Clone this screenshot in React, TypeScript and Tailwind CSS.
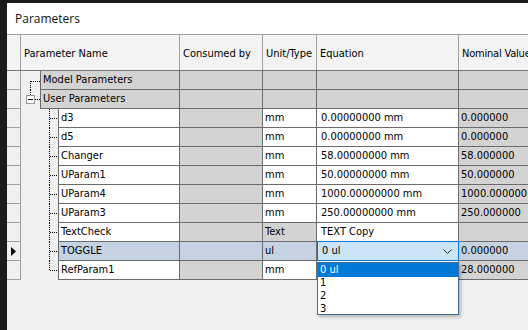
import React from 'react';

interface Param {
  name:  string;
  unit:  string;
  eq:    string;
  nom:   string;
  unitGrey?: boolean;
}

const params: Param[] = [
  { name: 'd3',        unit: 'mm',   eq: '0.00000000 mm',    nom: '0.000000' },
  { name: 'd5',        unit: 'mm',   eq: '0.00000000 mm',    nom: '0.000000' },
  { name: 'Changer',   unit: 'mm',   eq: '58.00000000 mm',   nom: '58.000000' },
  { name: 'UParam1',   unit: 'mm',   eq: '50.00000000 mm',   nom: '50.000000' },
  { name: 'UParam4',   unit: 'mm',   eq: '1000.00000000 mm', nom: '1000.000000' },
  { name: 'UParam3',   unit: 'mm',   eq: '250.00000000 mm',  nom: '250.000000' },
  { name: 'TextCheck', unit: 'Text', eq: 'TEXT Copy',        nom: '', unitGrey: true },
  { name: 'TOGGLE',    unit: 'ul',   eq: '0 ul',             nom: '0.000000' },
  { name: 'RefParam1', unit: 'mm',   eq: '',                 nom: '28.000000' },
];

const line = 'border-[#6b6b6b]';

function RowHead({ active }: { active?: boolean }) {
  return (
    <div className="w-[14px] h-full flex-shrink-0 bg-[#f0f0f0] border-r border-b border-[#a0a0a0] flex items-center justify-center">
      {active && (
        <svg width="5" height="9" viewBox="0 0 5 9"><path d="M0 0 L5 4.5 L0 9 Z" fill="#000" /></svg>
      )}
    </div>
  );
}

function ChildTree({ last }: { last: boolean }) {
  return (
    <svg width="37" height="19" className="flex-shrink-0 block">
      <line x1="28.5" y1="0" x2="28.5" y2={last ? 10 : 19} stroke="#000" strokeDasharray="1 1" />
      <line x1="29" y1="9.5" x2="37" y2="9.5" stroke="#000" strokeDasharray="1 1" />
    </svg>
  );
}

export default function App() {
  return (
    <div className="w-[528px] h-[330px] overflow-hidden bg-[#1b1b1b] pt-[3px] pl-[7px] font-['DejaVu_Sans_Condensed','DejaVu_Sans',sans-serif] text-[11px] text-black">
      <div className="w-[560px] h-[340px] bg-[#f0f0f0] flex flex-col">
        {/* Title */}
        <div className="h-[31px] bg-white flex items-center px-[8px] font-['Open_Sans',sans-serif] text-[12px] text-[#111]">
          Parameters
        </div>

        {/* Grid */}
        <div className="relative border-t border-[#a0a0a0]">
          {/* Header */}
          <div className="flex h-[36px] bg-[#f3f3f3] border-b border-[#777]">
            <div className="w-[14px] border-r border-[#a0a0a0]" />
            <div className="w-[159px] border-r border-[#a0a0a0] flex items-center pl-[3px] pt-[3px]">Parameter Name</div>
            <div className="w-[83px] border-r border-[#a0a0a0] flex items-center pl-[3px] pt-[3px]">Consumed by</div>
            <div className="w-[54px] border-r border-[#a0a0a0] flex items-center pl-[3px] pt-[3px]">Unit/Type</div>
            <div className="w-[142px] border-r border-[#a0a0a0] flex items-center pl-[3px] pt-[3px]">Equation</div>
            <div className="w-[100px] flex items-center pl-[3px] pt-[3px] tracking-[-0.2px]">Nominal Value</div>
          </div>

          {/* Model Parameters */}
          <div className="flex h-[19px]">
            <RowHead />
            <svg width="19" height="19" className="flex-shrink-0 block">
              <line x1="9.5" y1="10" x2="9.5" y2="19" stroke="#000" strokeDasharray="1 1" />
              <line x1="10" y1="10.5" x2="19" y2="10.5" stroke="#000" strokeDasharray="1 1" />
            </svg>
            <div className={`w-[140px] bg-[#d3d3d3] border-l border-r border-b ${line} flex items-center pl-[2px] pt-px`}>Model Parameters</div>
            <div className={`w-[83px] bg-[#d3d3d3] border-r border-b ${line}`} />
            <div className={`w-[54px] bg-[#d3d3d3] border-r border-b ${line}`} />
            <div className={`w-[142px] bg-[#d3d3d3] border-r border-b ${line}`} />
            <div className={`w-[100px] bg-[#d3d3d3] border-b ${line}`} />
          </div>

          {/* User Parameters */}
          <div className="flex h-[19px]">
            <RowHead />
            <svg width="19" height="19" className="flex-shrink-0 block">
              <line x1="9.5" y1="0" x2="9.5" y2="5" stroke="#000" strokeDasharray="1 1" />
              <rect x="5.5" y="5.5" width="8" height="8" fill="#fff" stroke="#999" />
              <line x1="7" y1="9.5" x2="12" y2="9.5" stroke="#000" />
              <line x1="14" y1="9.5" x2="19" y2="9.5" stroke="#000" strokeDasharray="1 1" />
            </svg>
            <div className={`w-[140px] bg-[#d3d3d3] border-l border-r border-b ${line} flex items-center pl-[2px] pt-px`}>User Parameters</div>
            <div className={`w-[83px] bg-[#d3d3d3] border-r border-b ${line}`} />
            <div className={`w-[54px] bg-[#d3d3d3] border-r border-b ${line}`} />
            <div className={`w-[142px] bg-[#d3d3d3] border-r border-b ${line}`} />
            <div className={`w-[100px] bg-[#d3d3d3] border-b ${line}`} />
          </div>

          {/* Child parameters */}
          {params.map((p, i) => {
            const sel = p.name === 'TOGGLE';
            const white = sel ? 'bg-[#c4d2e1]' : 'bg-white';
            const grey = sel ? 'bg-[#c4d2e1]' : 'bg-[#d3d3d3]';
            return (
              <div key={p.name} className="flex h-[19px]">
                <RowHead active={sel} />
                <ChildTree last={i === params.length - 1} />
                <div className={`w-[122px] ${white} border-l border-r border-b ${line} flex items-center pl-[2px] pt-px`}>{p.name}</div>
                <div className={`w-[83px] ${grey} border-r border-b ${line}`} />
                <div className={`w-[54px] ${p.unitGrey ? grey : white} border-r border-b ${line} flex items-center pl-[2px] pt-px`}>{p.unit}</div>
                {sel ? (
                  <div className="w-[142px] h-[20px] -mt-px bg-[#cce4f7] border border-[#0078d7] flex items-center justify-between pl-[4px] pr-[6px] pt-px z-10">
                    <span>{p.eq}</span>
                    <svg width="9" height="5" viewBox="0 0 9 5"><polyline points="0.5,0.5 4.5,4.5 8.5,0.5" fill="none" stroke="#333" /></svg>
                  </div>
                ) : (
                  <div className={`w-[142px] bg-white border-r border-b ${line} flex items-center pl-[4px] pt-px`}>{p.eq}</div>
                )}
                <div className={`w-[100px] ${grey} border-b ${line} flex items-center pl-[2px] pt-px`}>{p.nom}</div>
              </div>
            );
          })}

          {/* Open dropdown list */}
          <div className="absolute left-[310px] top-[227px] w-[142px] h-[53px] bg-white border border-[#3f6f9f] shadow-[2px_2px_3px_rgba(0,0,0,0.25)] z-20 flex flex-col">
            <div className="h-[14px] bg-[#0078d7] text-white pl-[2px] flex items-center">0 ul</div>
            <div className="h-[13px] pl-[2px] flex items-center">1</div>
            <div className="h-[13px] pl-[2px] flex items-center">2</div>
            <div className="h-[12px] pl-[2px] flex items-center">3</div>
          </div>
        </div>
      </div>
    </div>
  );
}
